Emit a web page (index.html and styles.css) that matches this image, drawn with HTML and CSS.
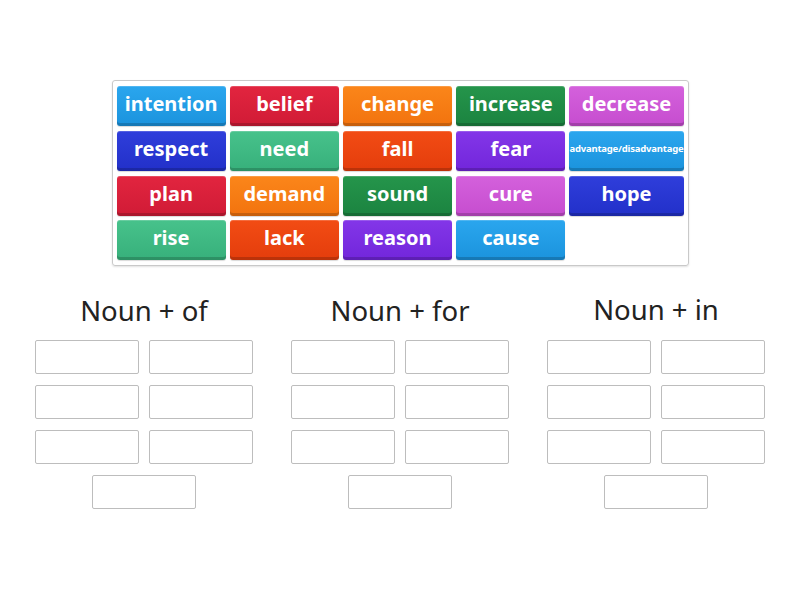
FILE: index.html
```html
<!DOCTYPE html>
<html lang="en">
<head>
<meta charset="utf-8">
<title>Group sort</title>
<link rel="stylesheet" href="styles.css">
</head>
<body>
<main class="page">
  <section class="bank">
    <div class="tile sky">intention</div>
    <div class="tile red">belief</div>
    <div class="tile orange">change</div>
    <div class="tile green">increase</div>
    <div class="tile orchid">decrease</div>
    <div class="tile royal">respect</div>
    <div class="tile sea">need</div>
    <div class="tile flame">fall</div>
    <div class="tile purple">fear</div>
    <div class="tile sky small">advantage/disadvantage</div>
    <div class="tile red">plan</div>
    <div class="tile orange">demand</div>
    <div class="tile green">sound</div>
    <div class="tile orchid">cure</div>
    <div class="tile royal">hope</div>
    <div class="tile sea">rise</div>
    <div class="tile flame">lack</div>
    <div class="tile purple">reason</div>
    <div class="tile sky">cause</div>
  </section>

  <section class="groups">
    <div class="group">
      <h2 class="title">Noun + of</h2>
      <div class="slots">
        <div class="slot"></div><div class="slot"></div>
        <div class="slot"></div><div class="slot"></div>
        <div class="slot"></div><div class="slot"></div>
        <div class="slot last"></div>
      </div>
    </div>
    <div class="group">
      <h2 class="title">Noun + for</h2>
      <div class="slots">
        <div class="slot"></div><div class="slot"></div>
        <div class="slot"></div><div class="slot"></div>
        <div class="slot"></div><div class="slot"></div>
        <div class="slot last"></div>
      </div>
    </div>
    <div class="group">
      <h2 class="title up">Noun + in</h2>
      <div class="slots">
        <div class="slot"></div><div class="slot"></div>
        <div class="slot"></div><div class="slot"></div>
        <div class="slot"></div><div class="slot"></div>
        <div class="slot last"></div>
      </div>
    </div>
  </section>
</main>
</body>
</html>
```

FILE: styles.css
```css
* { box-sizing: border-box; }

html, body {
  margin: 0;
  padding: 0;
  background: #ffffff;
}

body {
  font-family: "Noto Sans", "Open Sans", "DejaVu Sans", sans-serif;
  color: #222222;
}

.page {
  width: 800px;
  height: 600px;
  padding-top: 80px;
}

.bank {
  width: 577px;
  margin: 0 auto;
  padding: 5px 4px 5px 4px;
  border: 1px solid #c9c9c9;
  border-radius: 3px;
  box-shadow: 0 1px 2px rgba(0, 0, 0, 0.12);
  display: grid;
  grid-template-columns: repeat(5, 1fr);
  grid-auto-rows: 40px;
  column-gap: 4px;
  row-gap: 4.8px;
}

.tile {
  display: flex;
  align-items: center;
  justify-content: center;
  border-radius: 3px;
  color: #ffffff;
  font-weight: 700;
  font-size: 20px;
  line-height: 1;
  padding-bottom: 4px;
  white-space: nowrap;
  box-shadow: inset 0 -3px 0 rgba(0, 0, 0, 0.18), inset 0 1px 0 rgba(255, 255, 255, 0.18), 0 1px 1px rgba(0, 0, 0, 0.15);
}

.tile.small {
  font-size: 9.5px;
  letter-spacing: -0.2px;
}

.sky    { background: linear-gradient(#2aa6ee, #1b93dd); }
.red    { background: linear-gradient(#e2253f, #d01b36); }
.orange { background: linear-gradient(#fb861a, #f2730e); }
.green  { background: linear-gradient(#25954b, #1b8340); }
.orchid { background: linear-gradient(#d461dc, #c64dcf); }
.royal  { background: linear-gradient(#2f3edb, #2230c9); }
.sea    { background: linear-gradient(#47c28b, #37b07b); }
.flame  { background: linear-gradient(#f24c14, #e43d0c); }
.purple { background: linear-gradient(#8336e8, #7226db); }

.groups {
  display: flex;
  justify-content: center;
  margin-top: 27px;
}

.group {
  width: 256px;
  display: flex;
  flex-direction: column;
  align-items: center;
}

.title {
  margin: 0;
  font-size: 27.5px;
  font-weight: 400;
  line-height: 36px;
  color: #222222;
}

.title.up {
  margin-top: -1px;
  margin-bottom: 1px;
}

.slots {
  margin-top: 11px;
  display: grid;
  grid-template-columns: 104px 104px;
  column-gap: 10.5px;
  row-gap: 11px;
}

.slot {
  height: 34px;
  border: 1px solid #bdbdbd;
  border-radius: 2px;
  background: #ffffff;
}

.slot.last {
  grid-column: 1 / span 2;
  justify-self: center;
  width: 104px;
}
```
